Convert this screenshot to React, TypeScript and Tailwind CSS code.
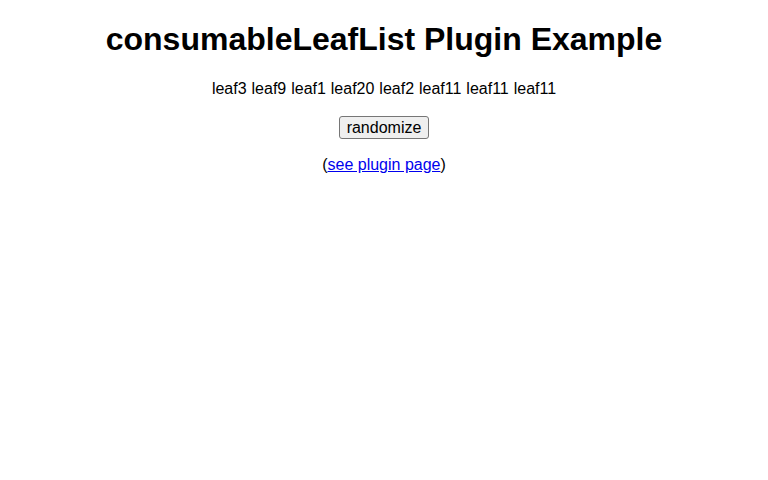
export default function App() {
  const leaves = ["leaf3", "leaf9", "leaf1", "leaf20", "leaf2", "leaf11", "leaf11", "leaf11"];
  return (
    <div className="min-h-[480px] bg-white text-center text-black text-[16px] font-['Liberation_Sans',Arial,sans-serif] pt-[21px]">
      <h1 className="text-[32px] font-bold leading-[37px]">consumableLeafList Plugin Example</h1>
      <p className="leading-[18px] mt-[22px] [word-spacing:0.5px]">{leaves.join(" ")}</p>
      <div className="mt-[18px] flex justify-center">
        <button className="h-[23px] bg-[#efefef] border border-[#767676] rounded-[3px] px-[7px] leading-[19px] text-[16px] text-black">
          randomize
        </button>
      </div>
      <p className="leading-[18px] mt-[17px]">
        (<a href="#" className="text-[#0000ee] underline">see plugin page</a>)
      </p>
    </div>
  );
}
